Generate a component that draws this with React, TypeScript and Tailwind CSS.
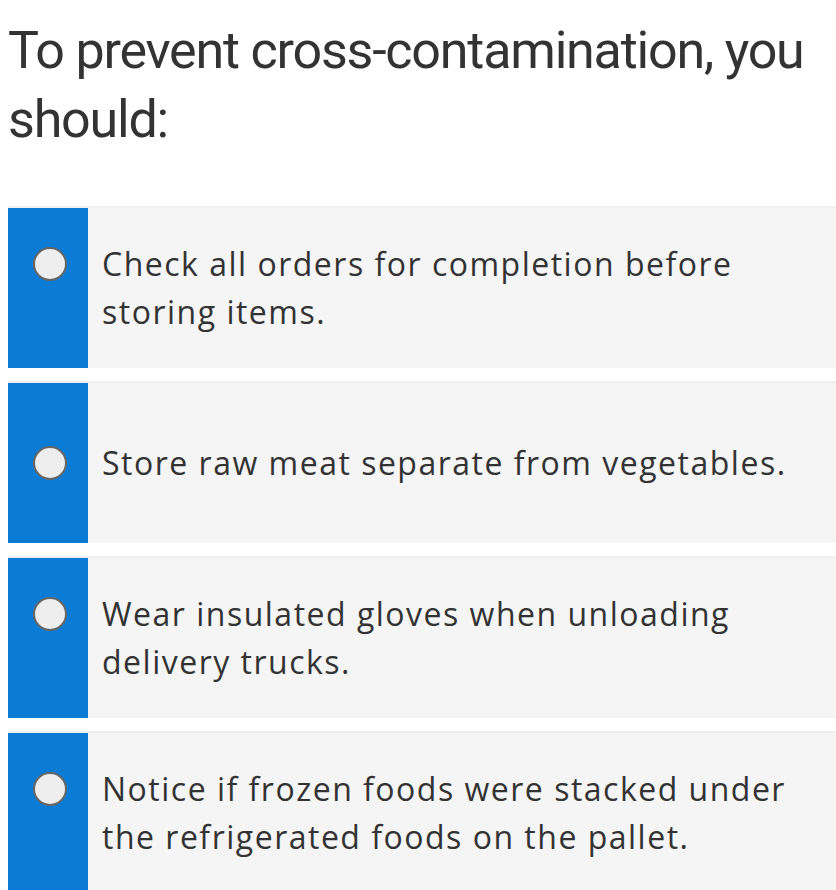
import React from "react";

const options = [
  "Check all orders for completion before storing items.",
  "Store raw meat separate from vegetables.",
  "Wear insulated gloves when unloading delivery trucks.",
  "Notice if frozen foods were stacked under the refrigerated foods on the pallet.",
];

export default function App() {
  return (
    <div className="min-h-screen w-[836px] overflow-hidden bg-white pl-2">
      <h1
        className="mt-4 pr-1 text-[52px] font-normal leading-[69px] tracking-[-1.2px] text-[#333333]"
        style={{ fontFamily: "Roboto, 'Liberation Sans', sans-serif" }}
      >
        To prevent cross-contamination, you should:
      </h1>
      <div className="mt-[54px] flex flex-col gap-[15px]">
        {options.map((o) => (
          <div
            key={o}
            className="flex min-h-[160px] items-center border-l-[80px] border-[#0a7cd5] bg-[#f5f5f5] py-8 pr-4 shadow-[0_-2px_0_#efefef]"
          >
            <div className="flex items-start">
              <div className="ml-[-55px] flex h-[48px] w-[34px] shrink-0 items-center">
                <div className="h-[34px] w-[34px] rounded-full border-2 border-[#666666] bg-[#eeeeee]" />
              </div>
              <p
                className="ml-[35px] text-[32px] leading-[48px] tracking-[1.5px] text-[#333333]"
                style={{ fontFamily: "'Open Sans', 'Noto Sans', sans-serif" }}
              >
                {o}
              </p>
            </div>
          </div>
        ))}
      </div>
    </div>
  );
}
